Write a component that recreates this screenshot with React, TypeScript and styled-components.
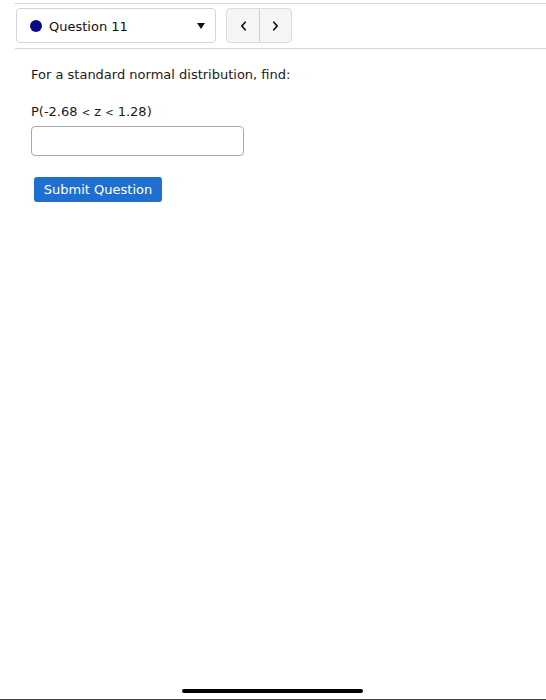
import React from 'react'
import styled, { createGlobalStyle } from 'styled-components'

const GlobalStyle = createGlobalStyle`
  html, body {
    margin: 0;
    padding: 0;
    background: #fff;
  }
  body {
    font-family: 'DejaVu Sans', Verdana, sans-serif;
    color: #1a1a1a;
  }
`

const Screen = styled.div`
  width: 546px;
  height: 700px;
  display: flex;
  flex-direction: column;
  box-sizing: border-box;
  border-bottom: 1px solid #444;
  overflow: hidden;
`

const TopRule = styled.div`
  height: 1px;
  margin: 3px 0 0 14px;
  background: #d8d8d8;
`

const Toolbar = styled.div`
  display: flex;
  align-items: center;
  gap: 10px;
  padding: 4px 0 5px 1px;
  margin-left: 15px;
  border-bottom: 1px solid #d6d6d6;
`

const QuestionSelect = styled.div`
  width: 200px;
  height: 35px;
  box-sizing: border-box;
  border: 1px solid #d4d4d4;
  border-radius: 4px;
  display: flex;
  align-items: center;
  padding: 1px 10px 0 13px;
  font-size: 13px;
  color: #111;
`

const Dot = styled.span`
  width: 12px;
  height: 12px;
  border-radius: 50%;
  background: #0b0b8c;
  margin-right: 7px;
`

const SelectLabel = styled.span`
  flex: 1;
`

const Caret = styled.span`
  width: 0;
  height: 0;
  border-left: 4px solid transparent;
  border-right: 4px solid transparent;
  border-top: 6px solid #111;
`

const NavGroup = styled.div`
  display: flex;
  height: 35px;
  box-sizing: border-box;
  border: 1px solid #dcdcdc;
  border-radius: 4px;
  background: #f5f5f5;
  overflow: hidden;
`

const NavButton = styled.button<{ $first?: boolean }>`
  width: 32px;
  border: none;
  border-left: ${(p) => (p.$first ? 'none' : '1px solid #d0d0d0')};
  background: transparent;
  display: flex;
  align-items: center;
  justify-content: center;
  padding: 0;
`

const Content = styled.div`
  display: flex;
  flex-direction: column;
  align-items: flex-start;
  padding: 18px 0 0 31px;
  font-size: 13px;
`

const Prompt = styled.p`
  margin: 0 0 22px;
`

const Expression = styled.p`
  margin: 0 0 7px;
`

const Lt = styled.span`
  font-size: 10px;
`

const AnswerInput = styled.input`
  width: 213px;
  height: 30px;
  box-sizing: border-box;
  border: 1px solid #a9a9a9;
  border-radius: 4px;
  margin: 0 0 21px;
`

const SubmitButton = styled.button`
  margin-left: 3px;
  width: 128px;
  height: 25px;
  border: none;
  border-radius: 3px;
  background: #1f6fd0;
  color: #fff;
  font-family: 'DejaVu Sans', Verdana, sans-serif;
  font-size: 13px;
  padding: 0;
`

const Spacer = styled.div`
  flex: 1;
`

const HomeIndicator = styled.div`
  align-self: center;
  width: 181px;
  height: 4px;
  border-radius: 2px;
  background: #000;
  margin: 0 0 6px -1px;
`

const Chevron = ({ dir }: { dir: 'left' | 'right' }) => (
  <svg width="7" height="10" viewBox="0 0 7 10" fill="none">
    <path
      d={dir === 'left' ? 'M5.2 1.2L1.8 5l3.4 3.8' : 'M1.8 1.2L5.2 5 1.8 8.8'}
      stroke="#111"
      strokeWidth="1.7"
      strokeLinecap="round"
      strokeLinejoin="round"
    />
  </svg>
)

export default function App() {
  return (
    <>
      <GlobalStyle />
      <Screen>
        <TopRule />
        <Toolbar>
          <QuestionSelect>
            <Dot />
            <SelectLabel>Question 11</SelectLabel>
            <Caret />
          </QuestionSelect>
          <NavGroup>
            <NavButton $first aria-label="Previous question">
              <Chevron dir="left" />
            </NavButton>
            <NavButton aria-label="Next question">
              <Chevron dir="right" />
            </NavButton>
          </NavGroup>
        </Toolbar>
        <Content>
          <Prompt>For a standard normal distribution, find:</Prompt>
          <Expression>
            P(-2.68 <Lt>&lt;</Lt> z <Lt>&lt;</Lt> 1.28)
          </Expression>
          <AnswerInput type="text" />
          <SubmitButton>Submit Question</SubmitButton>
        </Content>
        <Spacer />
        <HomeIndicator />
      </Screen>
    </>
  )
}
